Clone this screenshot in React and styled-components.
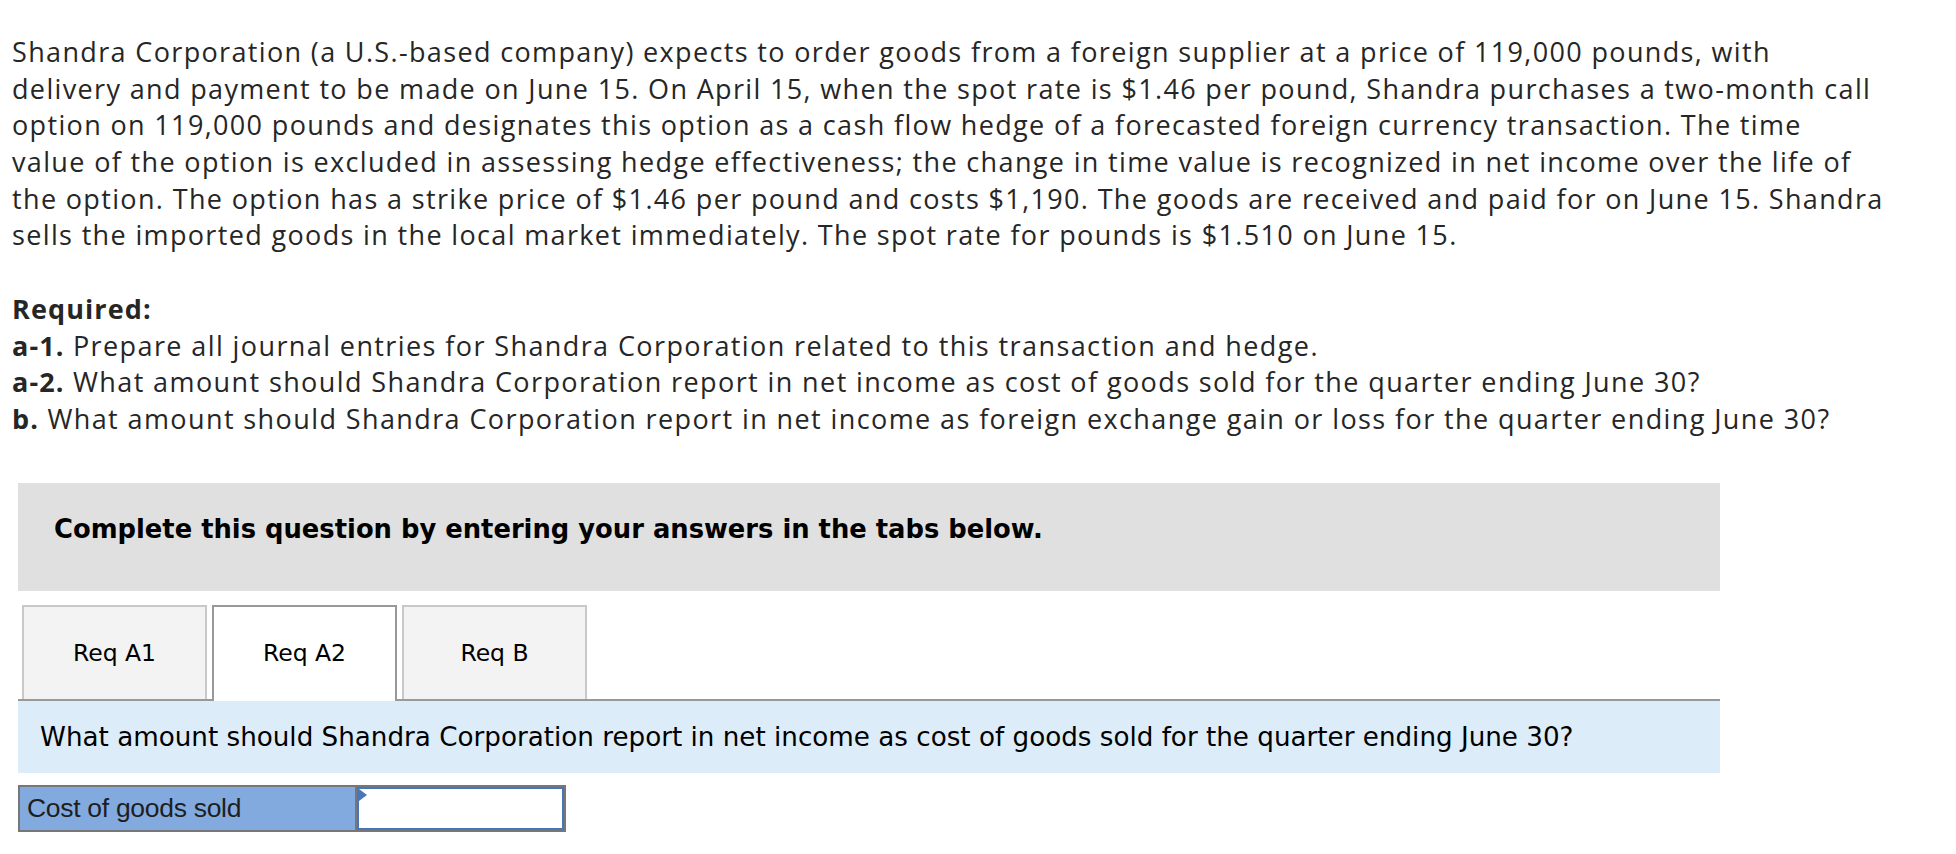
import React from "react";
import styled, { createGlobalStyle } from "styled-components";

const GlobalStyle = createGlobalStyle`
  html, body {
    margin: 0;
    padding: 0;
    background: #ffffff;
  }
`;

const Page = styled.div`
  padding: 34px 12px 0 12px;
  color: #262626;
  font-family: "Open Sans", Lato, sans-serif;
`;

const Paragraph = styled.p`
  margin: 0;
  font-size: 27px;
  letter-spacing: 1.35px;
  line-height: 36.67px;
  white-space: nowrap;
`;

const RequiredTitle = styled.div`
  margin-top: 37px;
  font-size: 27px;
  letter-spacing: 1.1px;
  line-height: 36.67px;
  font-weight: 700;
`;

const RequiredList = styled.div`
  font-size: 27px;
  letter-spacing: 1.4px;
  line-height: 36.67px;
  white-space: nowrap;

  & b {
    font-weight: 700;
    letter-spacing: 1.1px;
  }
`;

const Widget = styled.div`
  margin: 45px 0 0 6px;
  width: 1702px;
  font-family: "DejaVu Sans", Verdana, sans-serif;
`;

const Banner = styled.div`
  height: 108px;
  background: #e0e0e0;
  display: flex;
  align-items: center;
  padding: 0 0 16px 36px;
  box-sizing: border-box;
  font-size: 25.8px;
  font-weight: 700;
  color: #000;
`;

const TabList = styled.div`
  margin-top: 14px;
  display: flex;
  gap: 5px;
  padding-left: 4px;
  border-bottom: 2px solid #999999;
`;

const Tab = styled.div`
  width: 185px;
  height: ${(p) => (p.$active ? "96px" : "94px")};
  margin-bottom: ${(p) => (p.$active ? "-2px" : "0")};
  box-sizing: border-box;
  border: 2px solid ${(p) => (p.$active ? "#999999" : "#c8c8c8")};
  border-bottom: none;
  background: ${(p) => (p.$active ? "#ffffff" : "#f3f3f3")};
  display: flex;
  align-items: center;
  justify-content: center;
  padding-bottom: ${(p) => (p.$active ? "2px" : "0")};
  font-size: 23.5px;
  color: #000;
  position: relative;
`;

const Question = styled.div`
  height: 72px;
  background: #ddecf9;
  display: flex;
  align-items: center;
  padding-left: 22px;
  font-size: 26.2px;
  color: #000;
`;

const AnswerRow = styled.div`
  margin-top: 12px;
  display: flex;
  width: 548px;
  height: 47px;
  box-sizing: border-box;
  border: 2px solid #777777;
  font-family: "Liberation Sans", Arial, sans-serif;
`;

const Label = styled.div`
  width: 337px;
  background: #82aadf;
  border-right: 2px solid #777777;
  display: flex;
  align-items: center;
  padding-left: 7px;
  box-sizing: border-box;
  font-size: 26.5px;
  letter-spacing: -0.3px;
  color: #1e1e1e;
`;

const InputCell = styled.div`
  flex: 1;
  position: relative;
  border: 2px solid #4a76b9;
  background: #fff;
`;

const Flag = styled.span`
  position: absolute;
  left: 0;
  top: 0;
  width: 0;
  height: 0;
  border-top: 6px solid transparent;
  border-bottom: 6px solid transparent;
  border-left: 8px solid #4a76b9;
`;

export default function App() {
  return (
    <>
      <GlobalStyle />
      <Page>
        <Paragraph>
          Shandra Corporation (a U.S.-based company) expects to order goods from a foreign supplier at a price of 119,000 pounds, with
          <br />
          delivery and payment to be made on June 15. On April 15, when the spot rate is $1.46 per pound, Shandra purchases a two-month call
          <br />
          option on 119,000 pounds and designates this option as a cash flow hedge of a forecasted foreign currency transaction. The time
          <br />
          value of the option is excluded in assessing hedge effectiveness; the change in time value is recognized in net income over the life of
          <br />
          the option. The option has a strike price of $1.46 per pound and costs $1,190. The goods are received and paid for on June 15. Shandra
          <br />
          sells the imported goods in the local market immediately. The spot rate for pounds is $1.510 on June 15.
        </Paragraph>

        <RequiredTitle>Required:</RequiredTitle>
        <RequiredList>
          <b>a-1.</b> Prepare all journal entries for Shandra Corporation related to this transaction and hedge.
          <br />
          <b>a-2.</b> What amount should Shandra Corporation report in net income as cost of goods sold for the quarter ending June 30?
          <br />
          <b>b.</b> What amount should Shandra Corporation report in net income as foreign exchange gain or loss for the quarter ending June 30?
        </RequiredList>

        <Widget>
          <Banner>Complete this question by entering your answers in the tabs below.</Banner>
          <TabList>
            <Tab>Req A1</Tab>
            <Tab $active>Req A2</Tab>
            <Tab>Req B</Tab>
          </TabList>
          <Question>
            What amount should Shandra Corporation report in net income as cost of goods sold for the quarter ending June 30?
          </Question>
          <AnswerRow>
            <Label>Cost of goods sold</Label>
            <InputCell>
              <Flag />
            </InputCell>
          </AnswerRow>
        </Widget>
      </Page>
    </>
  );
}
